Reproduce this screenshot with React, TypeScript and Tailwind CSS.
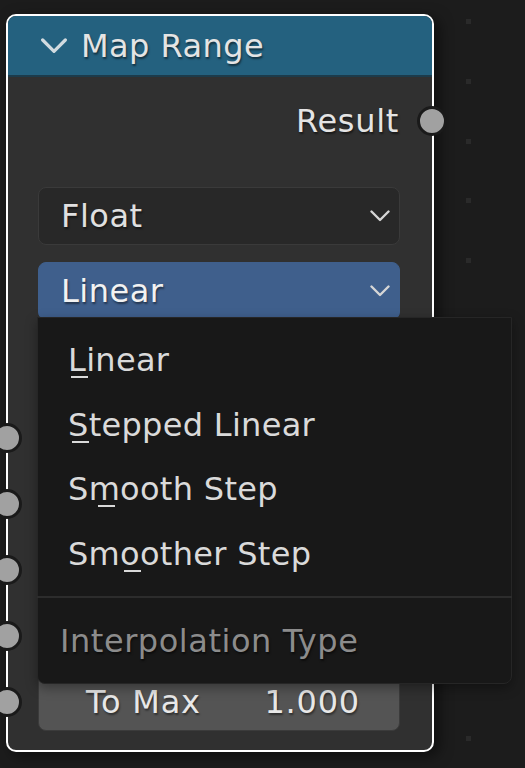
import type { ReactNode } from 'react';

// Blender-style "Map Range" node with its interpolation menu open

function Socket({ side }: { side: 'left' | 'right' }) {
  const pos = side === 'left' ? 'left-[-16px]' : 'right-[-15px]';
  return (
    <span
      className={`absolute ${pos} top-1/2 -translate-y-1/2 w-[30px] h-[30px] rounded-full bg-[#a1a1a1] border-[3px] border-[#1a1a1a]`}
    />
  );
}

function Chevron({ className }: { className: string }) {
  return (
    <svg className={className} viewBox="0 0 20 12" fill="none">
      <path d="M1.5 1.5 L10 10 L18.5 1.5" stroke="currentColor" strokeWidth="2.4" strokeLinecap="round" strokeLinejoin="round" />
    </svg>
  );
}

function Dropdown({ label, active }: { label: string; active?: boolean }) {
  return (
    <div
      className={`flex items-center justify-between h-[58px] rounded-[8px] border pl-[22px] pr-[9px] ${
        active ? 'bg-[#3f5f8c] border-[#3f5f8c] text-[#f2f2f2]' : 'bg-[#282828] border-[#3a3a3a] text-[#e0e0e0]'
      }`}
    >
      <span className="text-[32px] leading-none tracking-[0.5px] [text-shadow:1px_2px_2px_rgba(0,0,0,0.45)]">{label}</span>
      <Chevron className="w-[20px] h-[12px] text-[#d6d6d6]" />
    </div>
  );
}

function Field({ label, value, mt }: { label: string; value: string; mt: string }) {
  return (
    <div className={`relative ${mt} h-[58px] pl-[30px] pr-[32px]`}>
      <Socket side="left" />
      <div className="flex items-center justify-between h-full rounded-[8px] bg-[#545454] border border-[#3b3b3b] pl-[47px] pr-[39px] text-[32px] tracking-[0.8px] text-[#e8e8e8] [text-shadow:1px_2px_2px_rgba(0,0,0,0.45)]">
        <span>{label}</span>
        <span>{value}</span>
      </div>
    </div>
  );
}

// mnemonic letter with a short bar under it
function Mn({ children }: { children: ReactNode }) {
  return (
    <span className="relative">
      {children}
      <span className="absolute left-1/2 -ml-[6px] top-[35px] w-[17px] h-[2px] bg-[#d9d9d9]" />
    </span>
  );
}

function MenuItem({ children }: { children: ReactNode }) {
  return (
    <div className="h-[64.5px] flex items-center pl-[30px] text-[32px] leading-none tracking-[0.3px] text-[#dadada]">
      <span>{children}</span>
    </div>
  );
}

function Menu() {
  return (
    <div className="absolute left-[37px] top-[317px] w-[475px] h-[367px] bg-[#181818] border border-[#262626] rounded-b-[8px] pt-[10px] shadow-[0_4px_12px_rgba(0,0,0,0.35)]">
      <MenuItem>
        <Mn>L</Mn>inear
      </MenuItem>
      <MenuItem>
        <Mn>S</Mn>tepped Linear
      </MenuItem>
      <MenuItem>
        S<Mn>m</Mn>ooth Step
      </MenuItem>
      <MenuItem>
        Sm<Mn>o</Mn>other Step
      </MenuItem>
      <div className="mt-[10px] h-[2px] bg-[#2c2c2c] -mx-px" />
      <div className="mt-[11px] h-[64px] flex items-center pl-[22px] text-[32px] leading-none tracking-[0.55px] text-[#8c8c8c] [text-shadow:1px_2px_2px_rgba(0,0,0,0.5)]">
        Interpolation Type
      </div>
    </div>
  );
}

function GridDots() {
  return (
    <div className="absolute left-[466px] top-[19px] flex flex-col gap-[54.75px]">
      {Array.from({ length: 13 }, (_, i) => (
        <span key={i} className="block w-[5px] h-[5px] bg-[#2a2a2a]" />
      ))}
    </div>
  );
}

function MapRangeNode() {
  return (
    <div className="relative w-[428px] h-[738px] rounded-[10px] border-2 border-white bg-[#303030] shadow-[5px_4px_14px_rgba(0,0,0,0.5)]">
      <div className="h-[59px] rounded-t-[8px] bg-[#24617f] flex items-center pl-[32px] gap-[13px] text-[#e4e4e4]">
        <Chevron className="w-[28px] h-[16px] text-[#d2dbe0]" />
        <span className="text-[32px] leading-none tracking-[0.45px] [text-shadow:1px_2px_2px_rgba(0,0,0,0.5)]">Map Range</span>
      </div>
      <div className="h-[2px] bg-[#1c3b4b]" />

      <div className="relative mt-[22px] h-[44px] flex items-center justify-end pr-[33px]">
        <span className="text-[32px] leading-none tracking-[0.7px] text-[#e4e4e4] [text-shadow:1px_2px_2px_rgba(0,0,0,0.5)]">Result</span>
        <Socket side="right" />
      </div>

      <div className="mt-[44px] pl-[30px] pr-[32px]">
        <Dropdown label="Float" />
      </div>
      <div className="mt-[17px] pl-[30px] pr-[32px]">
        <Dropdown label="Linear" active />
      </div>

      <div className="mt-[17px] h-[58px] pl-[30px] pr-[32px] flex items-center gap-[12px] text-[32px] text-[#e0e0e0]">
        <span className="w-[28px] h-[28px] rounded-[6px] bg-[#545454]" />
        <span>Clamp</span>
      </div>

      <Field label="Value" value="1.000" mt="mt-[14px]" />
      <Field label="From Min" value="0.000" mt="mt-[8px]" />
      <Field label="From Max" value="1.000" mt="mt-[8px]" />
      <Field label="To Min" value="0.000" mt="mt-[8px]" />
      <Field label="To Max" value="1.000" mt="mt-[8px]" />
    </div>
  );
}

export default function App() {
  return (
    <div className="relative w-[525px] h-[768px] overflow-hidden bg-[#1c1c1c] font-['DejaVu_Sans',sans-serif]">
      <GridDots />
      <div className="pl-[6px] pt-[14px]">
        <MapRangeNode />
      </div>
      <Menu />
    </div>
  );
}
